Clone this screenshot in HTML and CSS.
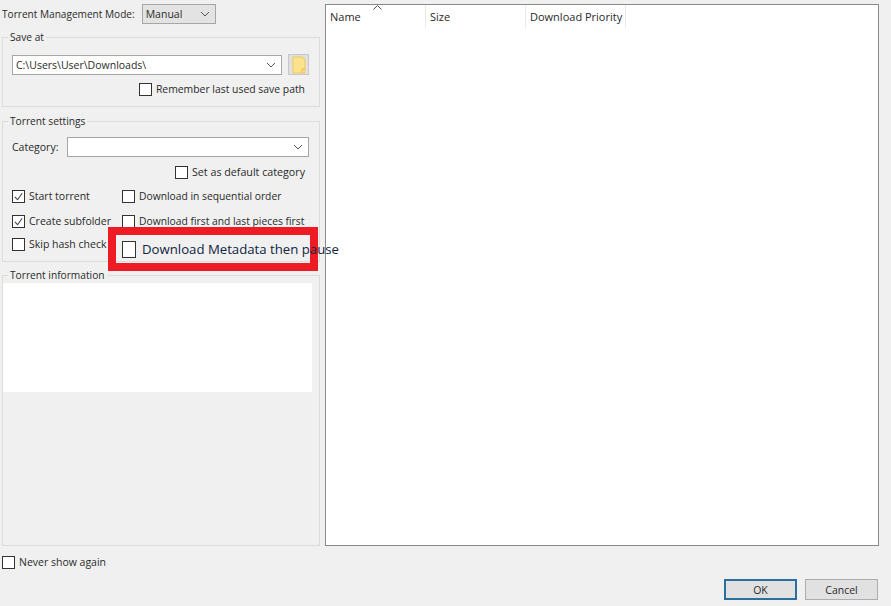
FILE: index.html
```html
<!DOCTYPE html>
<html lang="en">
<head>
<meta charset="utf-8">
<title>Torrent options</title>
<link rel="stylesheet" href="styles.css">
</head>
<body>
<div class="dialog">
  <div class="main">
    <div class="left">
      <div class="mode-row">
        <span class="mode-label">Torrent Management Mode:</span>
        <div class="select mode-select"><span>Manual</span><svg class="chev" viewBox="0 0 10 6"><path d="M1 1l4 4 4-4"/></svg></div>
      </div>
      <fieldset class="group save-group">
        <legend>Save at</legend>
        <div class="path-row">
          <div class="select path-select"><span>C:\Users\User\Downloads\</span><svg class="chev" viewBox="0 0 10 6"><path d="M1 1l4 4 4-4"/></svg></div>
          <div class="browse"><svg viewBox="0 0 14 18" class="folder"><path d="M1 1h9l3 2v14H1z" fill="#fde28e" stroke="#f0c860" stroke-width="1"/><path d="M10 17v-4h3" fill="none" stroke="#e4b850" stroke-width="1"/></svg></div>
        </div>
        <label class="check right-check remember-check"><span class="box"></span><span>Remember last used save path</span></label>
      </fieldset>
      <fieldset class="group settings-group">
        <legend>Torrent settings</legend>
        <div class="category-row">
          <span>Category:</span>
          <div class="select category-select"><span></span><svg class="chev" viewBox="0 0 10 6"><path d="M1 1l4 4 4-4"/></svg></div>
        </div>
        <label class="check right-check default-check"><span class="box"></span><span>Set as default category</span></label>
        <div class="options">
          <label class="check"><span class="box"><svg viewBox="0 0 12 12" class="tick"><path d="M2 6.5l3 3 5-7"/></svg></span><span>Start torrent</span></label>
          <label class="check wide"><span class="box"></span><span>Download in sequential order</span></label>
          <label class="check"><span class="box"><svg viewBox="0 0 12 12" class="tick"><path d="M2 6.5l3 3 5-7"/></svg></span><span>Create subfolder</span></label>
          <label class="check wide"><span class="box"></span><span>Download first and last pieces first</span></label>
          <label class="check"><span class="box"></span><span>Skip hash check</span></label>
        </div>
      </fieldset>
      <fieldset class="group info-group">
        <legend>Torrent information</legend>
        <div class="info-box"></div>
      </fieldset>
    </div>
    <div class="tree">
      <div class="tree-head">
        <div class="col col-name">Name<svg class="sort" viewBox="0 0 9 5"><path d="M.5 4.5l4-4 4 4"/></svg></div>
        <div class="col col-size">Size</div>
        <div class="col col-priority">Download Priority</div>
      </div>
    </div>
  </div>
  <label class="check never"><span class="box"></span><span>Never show again</span></label>
  <div class="buttons">
    <button class="btn btn-ok">OK</button>
    <button class="btn">Cancel</button>
  </div>
  <div class="callout">
    <span class="box callout-box"></span>
    <span class="callout-text">Download Metadata then pause</span>
  </div>
</div>
</body>
</html>
```
FILE: styles.css
```css
* { box-sizing: border-box; }
html, body { margin: 0; padding: 0; }
body {
  width: 891px;
  height: 606px;
  overflow: hidden;
  background: #f0f0f0;
  font-family: "Open Sans", "Noto Sans", "Liberation Sans", sans-serif;
  font-size: 10.5px;
  color: #2a2a2a;
}
.dialog {
  position: relative;
  width: 891px;
  height: 606px;
  display: flex;
  flex-direction: column;
}
.main {
  display: flex;
  height: 546px;
  padding: 4px 12px 0 2px;
  gap: 5px;
}
.left {
  width: 318px;
  display: flex;
  flex-direction: column;
}
.mode-row {
  height: 20px;
  margin-top: 0;
  display: flex;
  align-items: center;
  gap: 7px;
}
.mode-label { font-size: 10.1px; }
.select {
  display: flex;
  align-items: center;
  justify-content: space-between;
  background: #fff;
  border: 1px solid #a6a6a6;
  padding: 0 5px 0 3px;
}
.mode-select {
  width: 74px;
  height: 20px;
  background: #e3e3e3;
  padding-left: 3px;
}
.chev { width: 10px; height: 6px; fill: none; stroke: #555; stroke-width: 1; }
.group {
  margin: 0;
  padding: 0;
  min-width: 0;
  border: 1px solid #dcdcdc;
}
.group legend {
  padding: 0 2px;
  line-height: 14px;
  font-size: 10.2px;
}
.save-group { height: 77px; margin-top: 6px; padding: 10px 8px 0 9px; }
.save-group legend { margin-left: -4px; }
.path-row { display: flex; align-items: center; gap: 6px; }
.path-select { width: 270px; height: 20px; }
.browse {
  width: 21px;
  height: 21px;
  background: #e0e0e0;
  border: 1px solid #c8c8c8;
  display: flex;
  align-items: center;
  justify-content: center;
}
.folder { width: 14px; height: 18px; }
.check { display: flex; align-items: center; gap: 4px; white-space: nowrap; }
.box {
  flex: none;
  width: 13px;
  height: 13px;
  background: #fff;
  border: 1px solid #333;
  display: block;
}
.tick { display: block; width: 11px; height: 11px; fill: none; stroke: #444; stroke-width: 1.2; }
.right-check { justify-content: flex-end; margin-top: 7px; padding-right: 6px; }
.remember-check { font-size: 10.4px; }
.settings-group { height: 148px; margin-top: 7px; padding: 9px 10px 0 9px; }
.settings-group legend { margin-left: -4px; }
.category-row { display: flex; align-items: center; gap: 5px; }
.category-row > span { width: 50px; }
.category-select { width: 243px; height: 20px; }
.default-check { margin-top: 8px; padding-right: 4px; font-size: 10.7px; }
.options {
  display: grid;
  grid-template-columns: 110px auto;
  grid-template-rows: 25px 23px 15px;
  align-items: start;
  margin-top: 10px;
}
.wide { font-size: 10.3px; }
.info-group { flex: 1; margin-top: 6px; padding: 1px 0 0 0; }
.info-group legend { margin-left: 5px; }
.info-box { width: 309px; height: 109px; background: #fff; }
.tree {
  width: 554px;
  height: 542px;
  background: #fff;
  border: 1px solid #8a8a8a;
}
.tree-head { display: flex; height: 23px; }
.col {
  position: relative;
  padding: 4px 0 0 4px;
  border-right: 1px solid #eaeaea;
  font-size: 11px;
  white-space: nowrap;
  overflow: hidden;
}
.col-name { width: 100px; }
.col-size { width: 100px; }
.col-priority { width: 100px; }
.sort {
  position: absolute;
  left: 47px;
  top: 0;
  width: 9px;
  height: 5px;
  fill: none;
  stroke: #555;
}
.never { margin: 9px 0 0 2px; }
.buttons { display: flex; justify-content: flex-end; gap: 8px; padding: 10px 13px 0 0; }
.btn {
  width: 73px;
  height: 21px;
  padding: 0;
  background: #e1e1e1;
  border: 1px solid #adadad;
  font: inherit;
  color: #2a2a2a;
}
.btn-ok { border: 2px solid #2a6f9e; }
.callout {
  position: absolute;
  left: 108px;
  top: 227px;
  width: 210px;
  height: 44px;
  border: 8px solid #ed1c24;
  display: flex;
  align-items: center;
  gap: 6px;
  padding-left: 6px;
  white-space: nowrap;
}
.callout-box { width: 14px; height: 17px; }
.callout-text { font-size: 13.2px; color: #0f2440; }
```
